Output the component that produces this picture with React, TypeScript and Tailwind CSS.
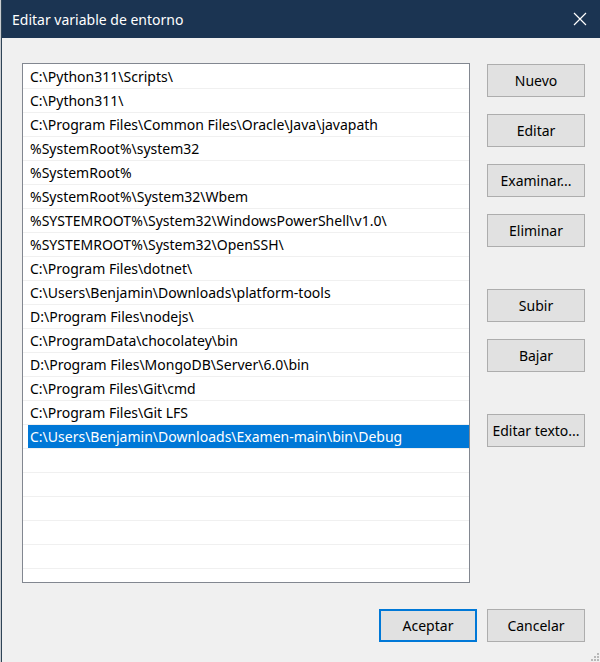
import React from "react";

const PATHS = [
  "C:\\Python311\\Scripts\\",
  "C:\\Python311\\",
  "C:\\Program Files\\Common Files\\Oracle\\Java\\javapath",
  "%SystemRoot%\\system32",
  "%SystemRoot%",
  "%SystemRoot%\\System32\\Wbem",
  "%SYSTEMROOT%\\System32\\WindowsPowerShell\\v1.0\\",
  "%SYSTEMROOT%\\System32\\OpenSSH\\",
  "C:\\Program Files\\dotnet\\",
  "C:\\Users\\Benjamin\\Downloads\\platform-tools",
  "D:\\Program Files\\nodejs\\",
  "C:\\ProgramData\\chocolatey\\bin",
  "D:\\Program Files\\MongoDB\\Server\\6.0\\bin",
  "C:\\Program Files\\Git\\cmd",
  "C:\\Program Files\\Git LFS",
  "C:\\Users\\Benjamin\\Downloads\\Examen-main\\bin\\Debug",
];

const SELECTED = 15;
const EMPTY_ROWS = 6;

const FONT = "font-['Noto_Sans','Liberation_Sans',sans-serif]";

function Btn({ label, primary = false, className = "" }: { label: string; primary?: boolean; className?: string }) {
  return (
    <button
      className={`w-[98px] h-[33px] bg-[#e1e1e1] text-[14px] text-black flex items-center justify-center ${
        primary ? "border-2 border-[#0078d7]" : "border border-[#adadad]"
      } ${className}`}
    >
      {label}
    </button>
  );
}

export default function App() {
  return (
    <div className={`w-[600px] h-[662px] flex bg-[#f0f0f0] overflow-hidden ${FONT}`}>
      {/* borde de la ventana */}
      <div className="w-[2px] h-full flex">
        <div className="w-[1px] bg-[#c9ccd0]" />
        <div className="w-[1px] bg-[#2f4457]" />
      </div>

      <div className="flex-1 flex flex-col">
        {/* barra de título */}
        <div className="h-[38px] bg-[#1b3452] flex items-center justify-between pl-[10px] pr-[13px] text-white">
          <span className="text-[14px]">Editar variable de entorno</span>
          <svg width="14" height="14" viewBox="0 0 14 14" className="block">
            <path d="M1 1 L13 13 M13 1 L1 13" stroke="#fff" strokeWidth="1.2" />
          </svg>
        </div>

        {/* contenido */}
        <div className="flex-1 relative pt-[25px] pl-[20px]">
          <div className="flex">
            {/* lista */}
            <div className="w-[448px] h-[520px] border border-[#828790] bg-white pt-[1px] overflow-hidden">
              {PATHS.map((p, i) => (
                <div key={i} className="h-[24px] border-b border-[#f0f0f0] flex">
                  <div
                    className={`flex-1 flex items-center pt-[1px] text-[14px] leading-none whitespace-nowrap ${
                      i === SELECTED ? "ml-[5px] pl-[2px] bg-[#0078d7] text-white" : "pl-[7px] text-black"
                    }`}
                  >
                    {p}
                  </div>
                </div>
              ))}
              {Array.from({ length: EMPTY_ROWS }).map((_, i) => (
                <div key={`e${i}`} className="h-[24px] border-b border-[#f0f0f0]" />
              ))}
            </div>

            {/* botones laterales */}
            <div className="ml-[17px] mt-[1px] flex flex-col">
              <Btn label="Nuevo" />
              <Btn label="Editar" className="mt-[17px]" />
              <Btn label="Examinar..." className="mt-[17px]" />
              <Btn label="Eliminar" className="mt-[17px]" />
              <Btn label="Subir" className="mt-[42px]" />
              <Btn label="Bajar" className="mt-[17px]" />
              <Btn label="Editar texto..." className="mt-[42px]" />
            </div>
          </div>

          {/* botones inferiores */}
          <div className="flex justify-end gap-[10px] mt-[26px] pr-[15px]">
            <Btn label="Aceptar" primary />
            <Btn label="Cancelar" />
          </div>

          {/* agarre de redimensión */}
          <svg width="10" height="10" viewBox="0 0 10 10" className="absolute right-[1px] bottom-[1px]">
            {[
              [8, 0], [8, 3], [5, 3], [8, 6], [5, 6], [2, 6],
            ].map(([x, y], i) => (
              <rect key={i} x={x} y={y + 2} width="2" height="2" fill="#b8b8b8" />
            ))}
          </svg>
        </div>
      </div>
    </div>
  );
}
